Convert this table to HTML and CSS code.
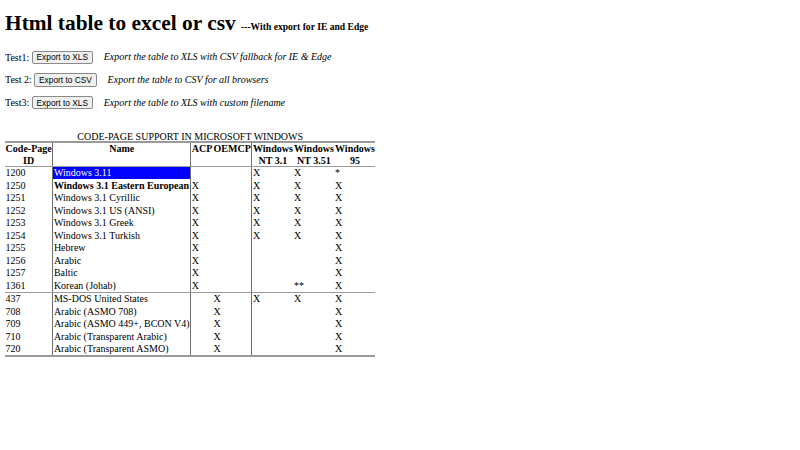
FILE: index.html
```html
<!DOCTYPE html>
<html>
<head>
<meta charset="utf-8">
<title>Html table to excel or csv</title>
<link rel="stylesheet" href="styles.css">
</head>
<body>
<h1 class="title">Html table to excel or csv <span class="subtitle">---With export for IE and Edge</span></h1>
<p class="test">Test1: <button class="btn" type="button">Export to XLS</button> <i class="desc">Export the table to XLS with CSV fallback for IE &amp; Edge</i></p>
<p class="test">Test 2: <button class="btn" type="button">Export to CSV</button> <i class="desc">Export the table to CSV for all browsers</i></p>
<p class="test">Test3: <button class="btn" type="button">Export to XLS</button> <i class="desc">Export the table to XLS with custom filename</i></p>
<table class="cp-table">
<caption class="cp-caption">CODE-PAGE SUPPORT IN MICROSOFT WINDOWS</caption>
<colgroup class="grp"></colgroup>
<colgroup class="grp"></colgroup>
<colgroup class="grp" span="2"></colgroup>
<colgroup class="grp-last" span="3"></colgroup>
<thead class="grp-row">
<tr><th>Code-Page<br>ID</th><th>Name</th><th>ACP</th><th>OEMCP</th><th>Windows<br>NT 3.1</th><th>Windows<br>NT 3.51</th><th>Windows<br>95</th></tr>
</thead>
<tbody class="grp-row">
<tr><td>1200</td><td class="hl">Windows 3.11</td><td></td><td></td><td>X</td><td>X</td><td>*</td></tr>
<tr><td>1250</td><td class="strong">Windows 3.1 Eastern European</td><td>X</td><td></td><td>X</td><td>X</td><td>X</td></tr>
<tr><td>1251</td><td>Windows 3.1 Cyrillic</td><td>X</td><td></td><td>X</td><td>X</td><td>X</td></tr>
<tr><td>1252</td><td>Windows 3.1 US (ANSI)</td><td>X</td><td></td><td>X</td><td>X</td><td>X</td></tr>
<tr><td>1253</td><td>Windows 3.1 Greek</td><td>X</td><td></td><td>X</td><td>X</td><td>X</td></tr>
<tr><td>1254</td><td>Windows 3.1 Turkish</td><td>X</td><td></td><td>X</td><td>X</td><td>X</td></tr>
<tr><td>1255</td><td>Hebrew</td><td>X</td><td></td><td></td><td></td><td>X</td></tr>
<tr><td>1256</td><td>Arabic</td><td>X</td><td></td><td></td><td></td><td>X</td></tr>
<tr><td>1257</td><td>Baltic</td><td>X</td><td></td><td></td><td></td><td>X</td></tr>
<tr><td>1361</td><td>Korean (Johab)</td><td>X</td><td></td><td></td><td>**</td><td>X</td></tr>
</tbody>
<tbody class="grp-row">
<tr><td>437</td><td>MS-DOS United States</td><td></td><td>X</td><td>X</td><td>X</td><td>X</td></tr>
<tr><td>708</td><td>Arabic (ASMO 708)</td><td></td><td>X</td><td></td><td></td><td>X</td></tr>
<tr><td>709</td><td>Arabic (ASMO 449+, BCON V4)</td><td></td><td>X</td><td></td><td></td><td>X</td></tr>
<tr><td>710</td><td>Arabic (Transparent Arabic)</td><td></td><td>X</td><td></td><td></td><td>X</td></tr>
<tr><td>720</td><td>Arabic (Transparent ASMO)</td><td></td><td>X</td><td></td><td></td><td>X</td></tr>
</tbody>
</table>
</body>
</html>
```
FILE: styles.css
```css
html {
  background: #ffffff;
}

body {
  margin: 5px;
  font-family: "Liberation Serif", "Times New Roman", serif;
  font-size: 10px;
  color: #000000;
}

.title {
  font-size: 21.4px;
  font-weight: bold;
  margin: 6px 0 14.7px;
}

.subtitle {
  font-size: 9.6px;
}

.test {
  margin: 9.6px 0;
}

.btn {
  font-family: "Liberation Sans", Arial, sans-serif;
  font-size: 8.33px;
  padding: 0.6px 3.75px;
  margin: 0;
  border: 1px solid #8a8a8a;
  border-radius: 2px;
  background: #efefef;
  color: #000000;
}

.desc {
  margin-left: 8.5px;
}

.cp-table {
  margin-top: 21px;
  border-collapse: collapse;
  border-spacing: 0;
  border-top: 2px solid #9a9a9a;
  border-bottom: 2px solid #9a9a9a;
  font-size: 10px;
}

.cp-caption {
  text-align: center;
  padding-top: 4px;
  line-height: 6.25px;
}

.grp {
  border-right: 1px solid #707070;
}

.grp-row {
  border-top: 1px solid #9a9a9a;
  border-bottom: 1px solid #9a9a9a;
}

.cp-table th,
.cp-table td {
  padding: 0.625px 0.6px;
  line-height: 11.25px;
  text-align: left;
  vertical-align: middle;
}

.cp-table th {
  padding-bottom: 0;
  text-align: center;
  vertical-align: top;
  font-weight: bold;
}

.cp-table .hl {
  background: #0000ff;
  color: #ffffff;
}

.cp-table .strong {
  font-weight: bold;
}
```
